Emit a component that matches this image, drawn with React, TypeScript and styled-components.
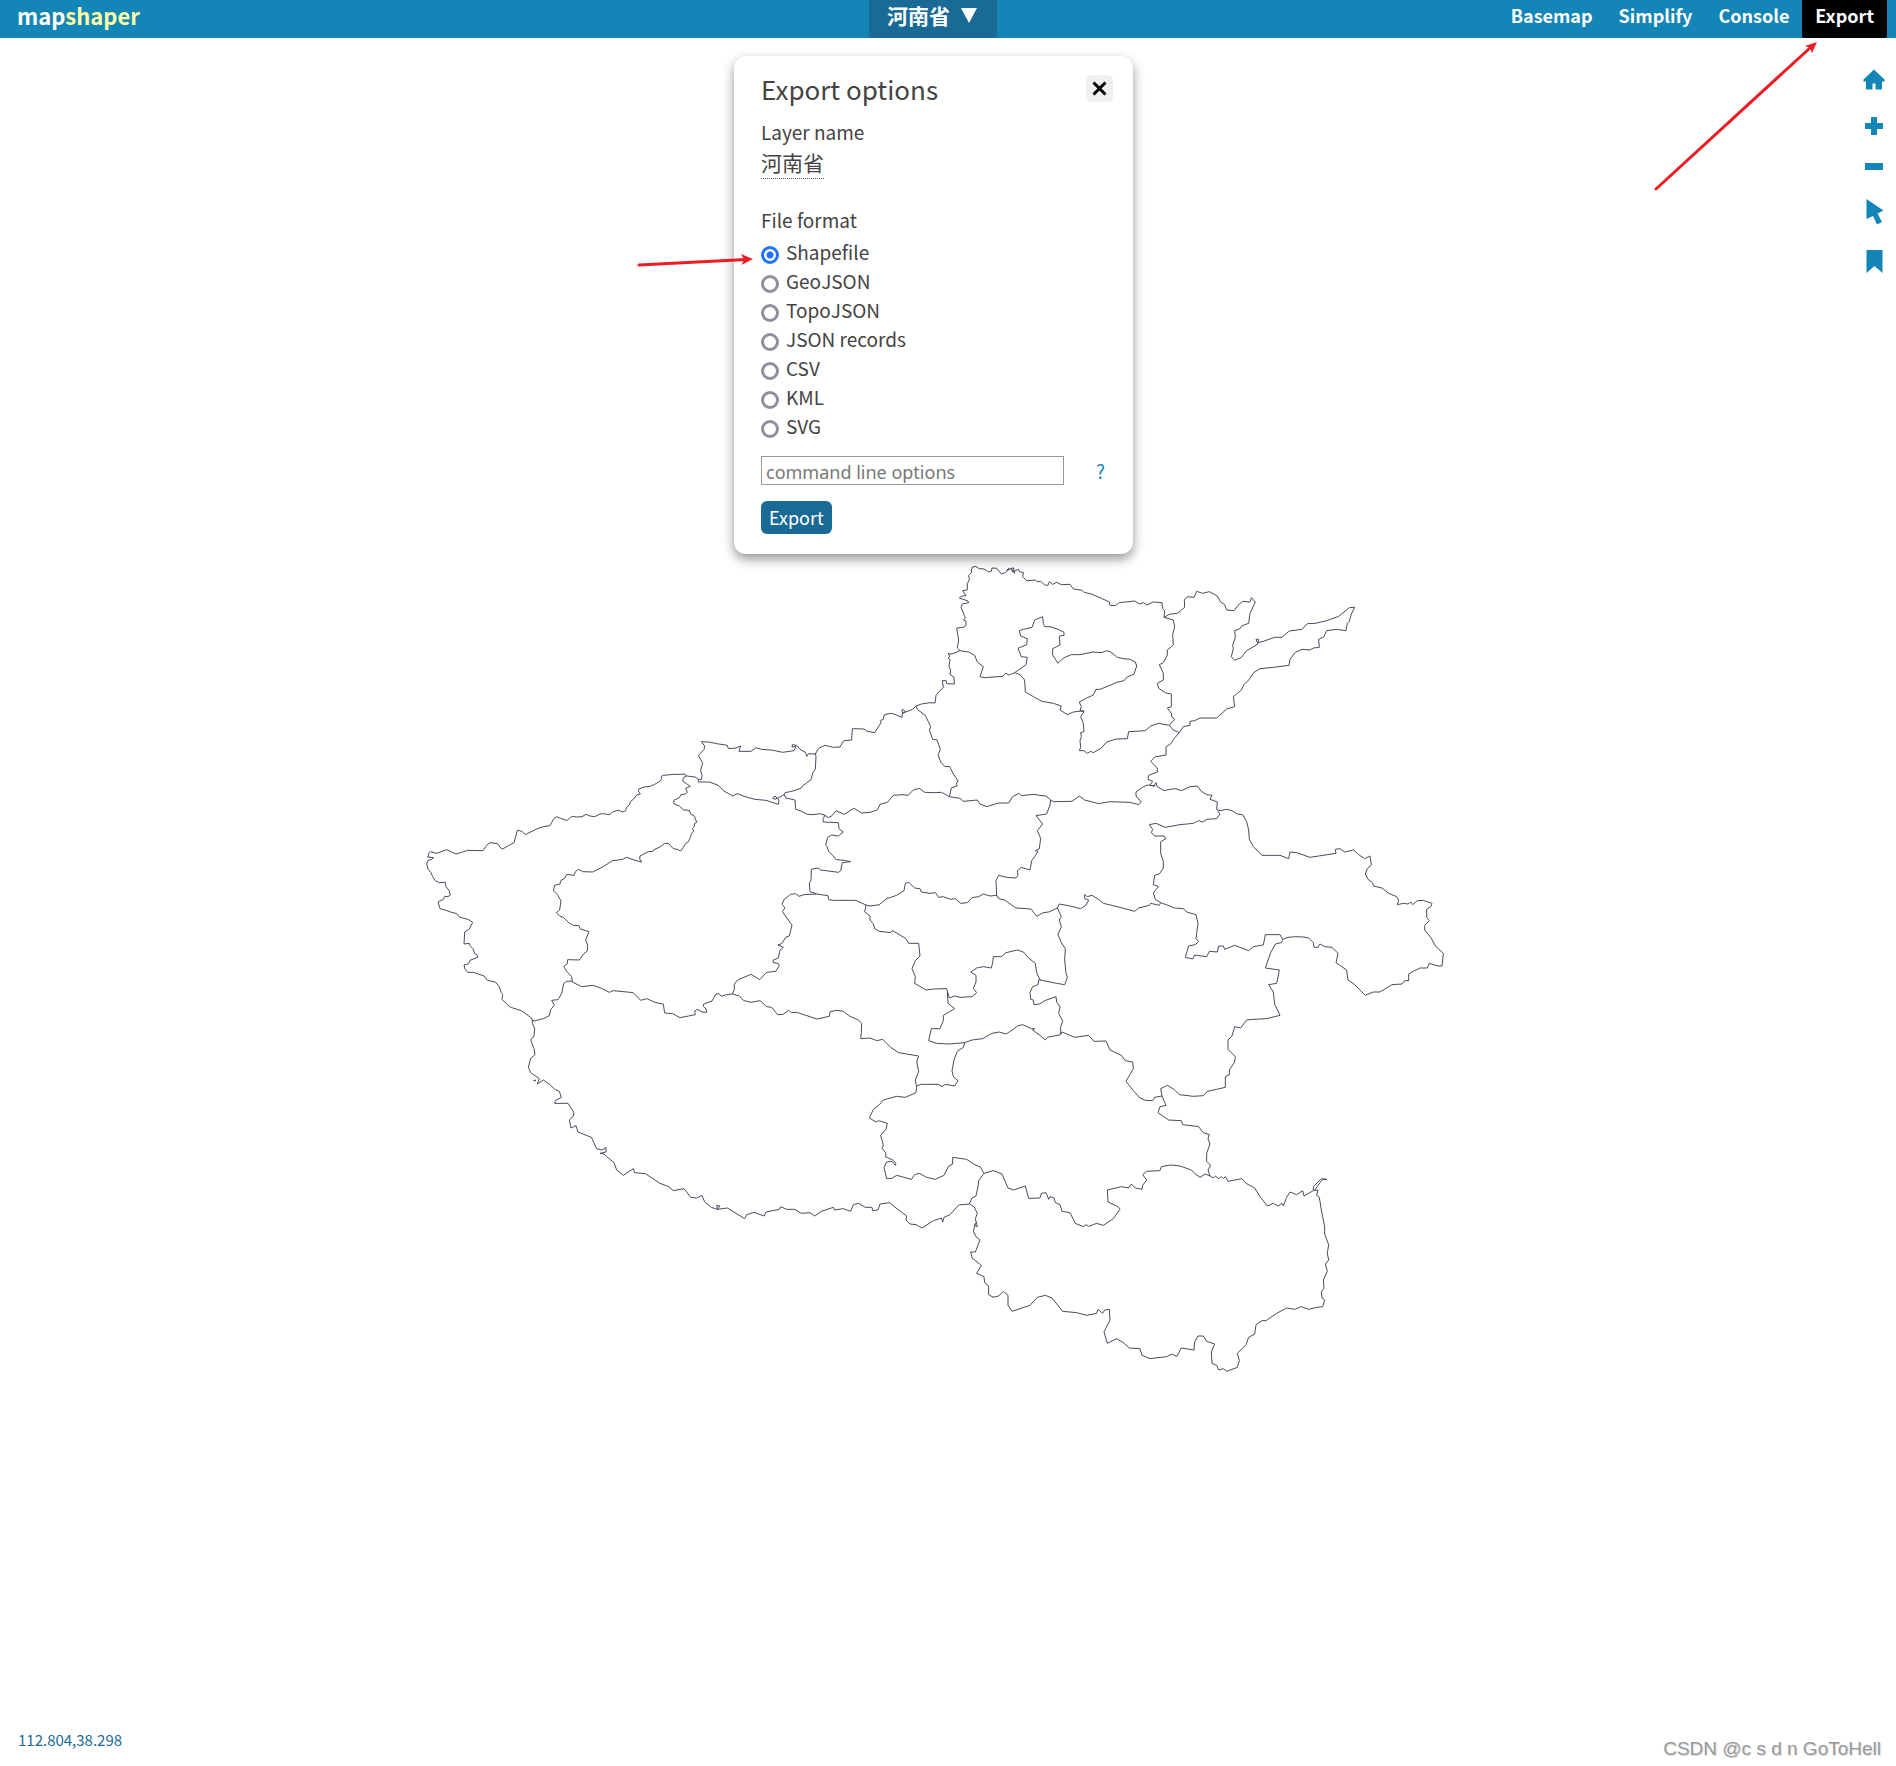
import React, { useState } from "react";
import styled, { createGlobalStyle } from "styled-components";

const SANS = `"Noto Sans CJK SC", "Source Sans Pro", sans-serif`;
const BLUE = "#1385b7";
const DARK_BLUE = "#1a6a96";

const GlobalStyle = createGlobalStyle`
  *, *::before, *::after { box-sizing: border-box; }
  body {
    margin: 0;
    background: #fff;
    color: #444;
    font-family: ${SANS};
    font-size: 19px;
    line-height: 29px;
  }
  button, input { font-family: inherit; }
`;

const Page = styled.div`
  position: relative;
  display: flex;
  flex-direction: column;
  min-height: 100vh;
  overflow: hidden;
`;

const Header = styled.header`
  display: grid;
  grid-template-columns: minmax(0, 1fr) auto minmax(0, 1fr);
  height: 38px;
  padding-right: 30px;
  background: ${BLUE};
  color: #fff;
`;

const Logo = styled.a`
  justify-self: start;
  padding-left: 17px;
  color: #fff;
  font-size: 22px;
  font-weight: 700;
  line-height: 30px;
  text-decoration: none;
`;

const LogoAccent = styled.span`
  color: #ffffa8;
`;

const LayerButton = styled.button`
  display: flex;
  gap: 11px;
  width: 128px;
  padding: 0 0 8px 18px;
  align-items: center;
  border: 0;
  background: ${DARK_BLUE};
  color: #fff;
  font-size: 21px;
  font-weight: 700;
  line-height: 30px;
`;

const Nav = styled.nav`
  display: flex;
  justify-content: flex-end;
  margin-right: -21px;
`;

const NavButton = styled.button<{ $active?: boolean }>`
  padding: 0 13px 8px;
  border: 0;
  border-radius: 0 0 2px 2px;
  background: ${(p) => (p.$active ? "#000" : "transparent")};
  color: #fff;
  font-size: 18px;
  font-weight: 700;
  line-height: 30px;
`;

const Stage = styled.main`
  position: relative;
  display: flex;
  flex: 1;
  justify-content: center;
  align-items: flex-start;
  padding: 18px 29px 0 0;
`;

const MapCanvas = styled.svg`
  position: absolute;
  inset: 0;
  width: 100%;
  height: 100%;
`;

const Outline = styled.polyline`
  fill: none;
  stroke: #4c4a5c;
  stroke-width: 3;
  stroke-linejoin: round;
`;

const Toolbar = styled.div`
  position: absolute;
  top: 32px;
  right: 11px;
  display: flex;
  flex-direction: column;
  align-items: center;
  gap: 26px;
`;

const ToolButton = styled.button`
  display: flex;
  padding: 0;
  border: 0;
  background: none;
  color: ${BLUE};

  svg {
    display: block;
    fill: currentColor;
  }
`;

const Popup = styled.form`
  position: relative;
  width: 399px;
  padding: 19px 20px 20px 27px;
  border-radius: 12px;
  background: #fff;
  box-shadow: 0 5px 12px rgba(0, 0, 0, 0.42);
`;

const PopupHead = styled.div`
  display: flex;
  justify-content: space-between;
  height: 42px;
`;

const Title = styled.h1`
  margin: 0;
  font-size: 26px;
  font-weight: 400;
  line-height: 28px;
`;

const CloseButton = styled.button`
  display: grid;
  place-items: center;
  width: 27px;
  height: 27px;
  padding: 0;
  border: 0;
  border-radius: 5px;
  background: #f0f0f0;
`;

const FieldTitle = styled.div`
  height: 30px;
  line-height: 29px;
`;

const LayerName = styled.span`
  display: inline-block;
  height: 32px;
  margin-bottom: 26px;
  border-bottom: 1px dotted #555;
  font-size: 21px;
  line-height: 30px;
`;

const Formats = styled.fieldset`
  margin: 0;
  padding: 0;
  border: 0;
`;

const FormatsLegend = styled.legend`
  padding: 0 0 3px;
  line-height: 29px;
`;

const FormatRow = styled.label`
  display: flex;
  align-items: center;
  gap: 7px;
  height: 29px;
`;

const Radio = styled.input`
  appearance: none;
  width: 18px;
  height: 18px;
  margin: 6px 0 0;
  border: 3px solid #8f8f9d;
  border-radius: 50%;
  background: #fff;

  &:checked {
    border-color: #2071ff;
    background: radial-gradient(circle, #2071ff 3px, #fff 4px);
  }
`;

const OptionsRow = styled.div`
  display: flex;
  align-items: center;
  justify-content: space-between;
  margin: 16px 0;
  padding-right: 8px;
`;

const OptionsInput = styled.input`
  width: 303px;
  height: 29px;
  padding: 2px 4px 0;
  border: 1px solid #999;
  color: #444;
  font-family: "Noto Sans", sans-serif;
  font-size: 18px;

  &::placeholder {
    color: #777;
    opacity: 1;
  }
`;

const HelpLink = styled.a`
  color: ${BLUE};
  text-decoration: none;
`;

const ExportButton = styled.button`
  display: block;
  height: 33px;
  padding: 0 8px;
  border: 0;
  border-radius: 6px;
  background: ${DARK_BLUE};
  color: #fff;
  font-size: 18px;
  line-height: 33px;
`;

const Coordinates = styled.div`
  position: absolute;
  bottom: 12px;
  left: 18px;
  color: ${DARK_BLUE};
  font-size: 15px;
  line-height: 28px;
`;

const Watermark = styled.div`
  position: absolute;
  right: 15px;
  bottom: 5px;
  color: #999;
  font-family: "Liberation Sans", sans-serif;
  font-size: 19px;
  line-height: 24px;
  text-shadow: 1px 1px 0 #ddd;
`;

const Annotations = styled.svg`
  position: absolute;
  top: 0;
  left: 0;
  width: 100%;
  height: 100%;
  pointer-events: none;
`;

/* Boundary arcs, grouped in tiles; every tile uses thirds of a map unit. */
const TILES: { x: number; y: number; arcs: string[] }[] = [
  {
    x: 400,
    y: 540,
    arcs: [
      "860,708 855,702 840,703 822,703 790,706 784,709 784,718 781,723 764,733 750,739 732,741 716,747 715,753 721,762 710,765 700,778 692,784 688,795 680,802 677,812 668,816 656,811 650,812 640,815 628,824 608,821 600,822 584,830 570,828 558,823 546,830 530,831 518,829 511,832 502,841 496,840 485,836 470,830 462,835 450,857 430,860 410,867 376,884 366,874 352,871 347,890 342,908 325,917 308,927 302,924 293,911 270,908 260,916 249,932 203,931 185,937 168,942 155,936 140,929 110,940 92,935 88,937 83,951 101,953 95,958 84,962 80,972 84,987 93,998 98,1010 106,1022 118,1028 136,1027 138,1040 147,1051 151,1065 144,1070 134,1069 130,1078 114,1086 120,1106 135,1110 152,1116 170,1121 178,1131 206,1139 218,1147 208,1167 194,1176 192,1212 208,1210 210,1217 219,1226 224,1240 232,1245 233,1252 210,1261 206,1271 192,1275 195,1287 203,1297 220,1297 235,1302 252,1308 262,1321 286,1326 298,1340 303,1357 308,1363 306,1378 320,1392 332,1402 364,1412 392,1432 397,1440",
      "860,708 850,713 848,723 862,733 871,739 857,745 862,757 856,762 843,764 838,773 821,781 822,792 838,798 851,810 868,811 872,822 884,829 886,838 891,846 884,850 883,860 877,866 881,873 875,880 871,892 865,905 855,913 850,922 842,933 832,928 820,926 806,911 794,910 780,921 762,929 759,934 745,935 720,948 719,957 725,966 705,961 680,952 668,958 655,960 637,962 610,980 578,996 548,995 535,988 527,994 522,1006 500,1003 494,1015 483,1021 480,1032 464,1036 460,1052 474,1066 479,1077 483,1080 479,1110 469,1118 480,1129 490,1132 505,1147 520,1156 537,1157 541,1167 567,1175 557,1200 563,1216 562,1233 550,1243 538,1260 503,1259 502,1271 491,1279 500,1294 515,1310 517,1326",
      "517,1326 515,1323 500,1324 491,1331 485,1360 474,1379 455,1381 463,1396 452,1409 448,1427 430,1436 402,1443 397,1440",
      "517,1326 545,1340 580,1336 604,1345 628,1357 640,1352 700,1358 722,1381 740,1376 765,1387 790,1392 794,1419 818,1421 840,1433 886,1424 884,1413 892,1408 906,1416 920,1417 918,1407 910,1399 911,1392 936,1383 948,1362 957,1361 964,1369 975,1365 997,1362",
      "997,1362 1003,1348 1003,1332 1013,1320 1053,1303 1079,1319 1100,1297 1127,1294 1138,1277 1135,1271 1119,1267 1120,1260 1135,1254 1140,1230 1150,1222 1134,1215 1145,1211 1158,1191 1168,1188 1176,1155 1165,1140 1147,1115 1155,1104 1146,1093 1152,1079 1172,1063 1187,1061 1197,1069 1212,1064 1250,1062 1230,1055 1229,1044 1228,1030 1233,1020 1234,988 1254,984 1262,990 1316,997 1322,992 1327,968 1352,965 1333,961 1308,959 1298,946 1286,934 1281,920 1277,915 1283,892 1295,885 1315,888 1330,876 1317,866 1315,848 1270,846 1269,836 1275,826",
      "860,708 885,711 895,718 904,718 906,707 902,690 908,670 895,646 912,629 914,618 904,605 926,606 950,611 982,616 985,626 1008,624 1022,618 1017,634 1053,634 1068,623 1085,628 1120,631 1148,637 1182,632 1188,619 1176,621 1177,614 1190,616 1200,628 1216,637 1221,649 1226,641 1246,642 1248,650 1246,687 1238,700 1233,719 1220,729 1208,737 1203,745 1175,754 1155,758 1153,764",
      "895,718 895,726 928,726 955,736 970,752 998,768 1012,761 1035,770 1065,778 1098,781 1135,793 1137,780 1125,768 1118,774 1125,778 1138,772 1153,764 1158,774 1185,780 1187,808 1200,812 1222,823 1240,824 1260,821 1275,826 1285,833 1296,827 1308,812 1332,823 1362,805 1385,819 1410,817 1432,810 1440,793",
      "1246,642 1256,625 1275,616 1300,622 1320,621 1331,602 1355,600 1357,566 1392,567 1402,574 1424,578 1443,548 1442,541 1450,538 1453,524 1472,520",
      "1250,1062 1284,1067 1286,1079 1300,1081 1367,1081 1398,1095 1410,1098 1440,1094",
      "1398,1095 1394,1116 1410,1128 1410,1140 1420,1152 1425,1167 1442,1176",
      "997,1362 1018,1368 1030,1381 1052,1387 1080,1382 1100,1400 1115,1402 1133,1424 1150,1423 1165,1411 1175,1418 1190,1417 1218,1426 1250,1437 1288,1429 1290,1415 1310,1411 1330,1414 1350,1429 1375,1440 1385,1450 1384,1478 1382,1496",
    ],
  },
  {
    x: 880,
    y: 540,
    arcs: [
      "32,520 42,522 66,532 68,514 64,512 70,508 76,516 66,520 98,508 108,498 124,492 150,488 165,489 168,466 180,452 190,442 187,422 198,421 200,431 223,432 222,412 210,403 212,391 207,380 210,358 204,354 210,348 204,341 216,342 240,332 232,324 236,300 230,264 250,262 258,256 258,243 250,240 256,234 243,202 247,192 266,188 264,183 238,174 246,168 258,167 248,152 262,150 262,130 268,120 266,106 274,98 276,82 286,79 298,86 312,87 326,96 334,94 336,84 350,85 364,102 376,98 388,84 380,92 400,83 404,100 394,86 398,96 415,88 419,96 430,97 428,110 440,122 466,120 472,125 482,124 494,135 504,136 508,125 518,133 530,127 544,134 570,133 580,147 606,151 612,157 634,162 664,175 688,186 690,196 706,197 718,188 764,183 778,192 790,188 800,195 820,186 846,188 848,206 854,212 852,232",
      "108,498 112,508 136,526 152,560 148,570 158,598 171,600 181,628 174,644 182,666 194,679 209,680 220,702 234,722 228,734 232,737 214,744 208,770",
      "0,793 22,787 40,766 66,764 84,766 100,750 118,745 134,757 165,758 185,757 208,770 240,775 250,784 292,780 300,792 320,800 356,789 386,789 398,770 416,760 424,767 460,763 480,766 498,768 512,780 520,785 576,784 598,768 614,780 656,791 690,785 750,787 776,794 784,786 768,768 768,756 790,740 804,735 826,738",
      "852,232 868,223 892,220 914,202 913,180 922,170 942,172 950,154 968,160 988,155 1012,168 1022,186 1034,194 1040,210 1062,212 1074,196 1088,184 1110,186 1114,173 1126,186 1110,220 1106,250 1086,257 1080,266 1064,272 1066,292 1058,316 1060,326 1054,350 1064,361 1084,352 1100,332 1134,312 1128,298 1136,298 1134,308 1150,304 1184,292 1205,292 1228,273 1266,268 1282,251 1306,250 1340,242 1376,229 1408,203 1424,202 1414,222 1408,244 1402,250 1398,272 1370,268 1340,272 1332,290 1316,298 1318,322 1300,324 1290,330 1266,328 1246,337 1230,358 1227,376 1180,382 1140,386 1122,397 1106,420 1092,434 1084,450 1060,470 1064,500 1040,507 1010,534 960,534 944,542 930,544 930,556 910,560 898,578 882,596 872,612 858,620 858,645 824,651 812,664 832,684 832,696 806,706 804,718 818,724 810,736",
      "852,232 880,240 884,260 878,284 880,315 862,330 862,345 850,368 838,374 850,400 850,420 832,430 836,445 858,459 874,462 874,500 862,504 874,520 876,532 884,538 868,556 880,570 898,578",
      "868,556 836,550 812,558 796,572 746,575 742,596 708,597 680,606 664,624 640,638 632,634 622,640 612,632 598,632 602,622 600,602 604,590 602,578 612,575 610,550 602,530 612,515 600,512 604,500 598,486 620,474 640,465 648,448 660,448 690,436 710,427 732,422 740,412 762,402 770,378 766,366 750,358 730,356 712,352 692,336 680,332 664,338 640,336 600,344 574,344 550,354 534,370 518,345 518,326 540,315 538,288 552,286 552,277 534,268 510,260 494,260 490,250 488,230 464,240 456,262 430,268 418,272 422,288 442,296 440,314 414,325 424,350 442,352 438,374 404,398",
      "240,332 266,336 284,346 292,366 310,380 300,410 312,413 368,409 376,400 388,405 404,398 420,404 434,420 436,456 460,470 486,484 520,490 544,498 540,510 562,524 580,516 612,512",
      "512,780 510,795 500,822 468,827 488,852 472,872 482,895 478,926 466,932 474,934 468,944 455,962 450,990 424,982 412,992 414,1006 408,1014 380,1012 356,1006 348,1022 350,1068",
      "0,1092 20,1076 50,1066 72,1052 76,1030 86,1027 104,1044 120,1046 124,1056 150,1060 166,1058 176,1072 190,1070 212,1078 226,1076 242,1090 262,1088 276,1073 296,1070 310,1062 330,1068 350,1066 356,1076 374,1080 408,1104 440,1106 454,1108 470,1129 490,1118 506,1116 532,1104 538,1092 570,1098 602,1106 618,1095 626,1080 614,1076 614,1064 622,1070 636,1066 658,1080 670,1090 720,1102 764,1114 776,1104 808,1096 812,1090 838,1096 842,1088",
      "842,1088 826,1078 820,1058 836,1040 820,1034 824,1006 838,1002 850,984 850,964 842,940 842,905 858,896 852,888 824,888 814,878 818,868 808,854 828,850 856,862 900,854 940,850 956,842 968,846 980,838 1010,836 1020,822 1012,812",
      "810,736 822,738 828,728 832,740 852,752 870,748 886,746 904,752 930,740 952,738 964,754 980,764 996,766 990,778 1012,786 1010,808 1020,812 1040,808 1056,812 1072,822 1088,824 1100,845 1106,870 1108,898 1120,920 1146,946 1200,946 1226,956 1230,936 1250,938 1290,952 1316,948 1368,940 1366,928 1380,926 1394,936 1420,930 1436,944 1454,956 1470,948",
      "532,1104 544,1130 538,1140 544,1160 534,1184 544,1208 556,1226 554,1260 558,1300 562,1312 554,1334 530,1330 480,1320 470,1298 466,1270 448,1256 430,1236 412,1230 378,1238 364,1250 340,1250 338,1268 334,1284 310,1280 290,1284 272,1296 288,1306 288,1326 280,1345 290,1358 276,1370 240,1372 224,1368 208,1374 200,1346 160,1347 138,1350 104,1330 106,1310 96,1286 106,1262 120,1248 116,1210 86,1210 78,1196 48,1178 38,1172 30,1178 0,1174",
      "842,1088 864,1096 884,1104 910,1106 920,1116 948,1124 954,1150 948,1196 956,1204 946,1214 926,1218 916,1252 938,1257 944,1245 980,1250 988,1234 1012,1236 1016,1218 1030,1218 1034,1228 1064,1216 1106,1232 1120,1220 1150,1215 1156,1184 1200,1184 1208,1198 1224,1192 1246,1190 1270,1191 1286,1194 1300,1208 1302,1222 1314,1222 1320,1212 1334,1220 1356,1222 1374,1240 1368,1268 1400,1290 1404,1320 1424,1334 1440,1350 1456,1366",
      "1208,1198 1204,1208 1186,1212 1172,1238 1156,1284 1198,1290 1190,1330 1166,1334 1180,1356 1184,1392 1200,1426 1160,1436 1120,1438 1100,1440 1082,1464 1064,1460 1056,1488 1044,1500",
    ],
  },
  {
    x: 500,
    y: 960,
    arcs: [
      "97,180 97,190 104,205 102,228 92,240 102,266 105,284 92,295 85,322 92,338 118,356 112,372 130,360 150,374 164,388 178,394 184,412 166,422 164,430 204,430 222,458 220,468 208,480 213,504 228,497 234,516 274,532 290,566 306,570 318,562 318,576 300,580 312,582 320,590 342,608 350,630 370,646 400,626 404,638 436,641 480,670 506,680 520,692 552,686 572,712 590,714 606,706 614,726 634,742 652,748 660,738 650,736 652,748 682,744 734,776 740,764 762,757 792,768 798,756 838,748 842,740 860,748 884,748 904,760 930,758 944,768 964,754 1000,742 1004,750 1030,746 1052,754 1060,734 1076,730 1096,742 1116,742 1118,752 1134,750 1140,732 1168,728 1196,750 1220,768 1218,780 1230,792 1248,794 1266,804 1300,782 1324,774 1328,786 1332,772 1350,764 1376,735 1408,732",
      "1408,732 1422,740 1432,760 1426,776 1432,800 1424,796 1426,790 1420,814 1428,830 1440,840 1426,876 1412,876 1416,894 1444,916 1430,940 1452,950 1454,968 1466,978 1466,1004 1480,1012",
      "100,362 108,360 104,364",
      "1082,236 1110,234 1130,242 1148,238 1172,262 1196,278 1220,282 1256,288 1250,306 1256,334 1246,360 1250,384 1248,398 1216,412 1190,409 1150,420 1138,434 1120,448 1108,474 1128,486 1136,482 1162,490 1158,508 1142,526 1150,556 1146,565 1158,580 1156,590 1178,600 1188,610 1186,616 1176,604 1160,606 1152,622 1160,656 1176,655 1190,646 1212,652 1234,658 1244,644 1258,640 1280,652 1306,658 1332,646 1346,618 1358,612 1358,592 1400,598 1428,616 1440,620 1452,640",
      "1250,378 1262,373 1316,373 1326,380 1336,373 1364,378 1374,362 1360,350 1356,332 1362,300 1372,274 1390,262 1394,248",
      "1342,96 1344,130 1364,146 1330,166 1330,182 1320,206 1294,206 1286,242 1310,250 1346,252 1394,248",
      "1452,640 1436,662 1434,680 1428,708 1416,714 1408,732",
    ],
  },
  {
    x: 960,
    y: 960,
    arcs: [
      "14,248 36,240 68,236 96,220 118,216 138,222 160,208 172,198 188,194 214,206 224,206 218,210 240,226 256,240 262,232 302,224 306,216 344,232 386,226 402,244 438,243 450,270 484,286 496,302 518,306 520,326 498,364 520,392 540,414 556,421 578,422 584,412 606,408",
      "302,222 302,200 308,184 296,160 300,140 290,126 288,110 254,122 238,132 222,134 220,120 212,118 210,98 218,80 234,74 236,60 242,58",
      "606,408 602,386 622,376 642,388 658,404 700,409 730,407 742,394 770,388 796,382 796,350 808,344 808,330 824,306 826,290 804,268 804,240",
      "606,408 618,436 600,440 594,458 626,480 664,482 668,494 716,500 730,518 748,524 744,536 750,552 740,580 740,604 752,616 744,630 750,648",
      "72,640 100,632 126,642 144,684 160,690 196,678 206,715 240,714 244,700 258,698 266,718 270,710 282,714 286,728 300,734 306,754 330,758 346,790 370,800 378,794 386,799 400,794 410,790 430,796 460,776 480,748 474,740 444,726 442,690 484,680 506,684 514,672 526,684 546,688 548,676 560,660 548,644 560,634 600,632 604,620 632,615 660,618 694,630 704,640 720,652 736,642 750,648 760,654 766,648 776,656 784,650 790,656 796,650 804,664 846,656 858,670 884,684 900,710 922,738 940,730 954,738 966,730 970,738 980,712 990,696 1010,704 1028,692 1032,708 1060,692 1074,690 1070,706 1078,712 1084,750 1094,800 1094,822 1106,854 1102,880 1106,900 1096,912 1102,934 1090,960 1092,985 1084,995 1086,1014 1094,1020 1088,1040 1070,1042 1046,1048 1024,1040 1004,1048 980,1044 950,1060 918,1082 906,1082 888,1094 884,1122 866,1132 858,1154 832,1180 838,1202 832,1222 800,1234 790,1226 776,1230 770,1216 756,1210 754,1176 764,1152 740,1144 730,1128 714,1128 704,1146 702,1170 664,1164 650,1190 636,1182 620,1190 570,1196 546,1186 540,1166 508,1164 490,1148 470,1136 442,1150 432,1116 450,1080 448,1048 434,1050 428,1060 414,1048 410,1060 380,1066 350,1058 308,1054 276,1014 256,1006 232,1012 210,1036 156,1054 144,1036 144,1006 130,994 116,1008 98,1012",
      "1060,690 1060,680 1084,656 1100,658 1088,658 1074,676 1064,690",
    ],
  },
  {
    x: 1360,
    y: 850,
    arcs: [
      "30,18 34,45 22,56 16,72 24,88 38,98 40,108 66,114 86,130 110,140 116,150 112,164 130,160 144,162 152,156 158,164 172,152 190,151 216,160 212,170 200,178 200,202 208,212 194,226 194,240 212,262 228,290 250,310 246,348 234,348 208,340 202,354 180,354 160,364 146,372 146,392 134,392 126,402 96,404 60,426 40,426 16,436",
    ],
  },
];

const FORMATS = ["Shapefile", "GeoJSON", "TopoJSON", "JSON records", "CSV", "KML", "SVG"];

const TOOLS = [
  { label: "Home", width: 22, height: 20, path: "M11 -0.500 21.500 9.500v2H19v8h-6.500v-6h-3v6H3v-8H0.500v-2z" },
  { label: "Zoom in", width: 20, height: 20, path: "M7 1h6v6h6v6h-6v6H7v-6H1V7h6z" },
  { label: "Zoom out", width: 20, height: 10, path: "M1 1h18v7H1z" },
  { label: "Inspect", width: 20, height: 26, path: "M2.500 1 19.500 12.500 13.500 15.500 18 24 13 26.500 9 18 2.500 21z" },
  { label: "Bookmarks", width: 20, height: 24, path: "M2.500 0h16v23l-8-7-8 7z" },
];

export default function App() {
  const [format, setFormat] = useState("Shapefile");

  return (
    <>
      <GlobalStyle />
      <Page>
        <Header>
          <Logo href="#">
            map<LogoAccent>shaper</LogoAccent>
          </Logo>
          <LayerButton type="button">
            <span>河南省</span>
            <svg width="16" height="15" viewBox="0 0 16 15" fill="#fff" aria-hidden="true">
              <path d="M0 0h16L8 15z" />
            </svg>
          </LayerButton>
          <Nav>
            <NavButton type="button">Basemap</NavButton>
            <NavButton type="button">Simplify</NavButton>
            <NavButton type="button">Console</NavButton>
            <NavButton type="button" $active>
              Export
            </NavButton>
          </Nav>
        </Header>

        <Stage>
          <MapCanvas viewBox="0 38 1896 1728" role="img" aria-label="河南省">
            {TILES.map((tile) => (
              <g key={`${tile.x}-${tile.y}`} transform={`translate(${tile.x} ${tile.y}) scale(${1 / 3})`}>
                {tile.arcs.map((points) => (
                  <Outline key={points} points={points} />
                ))}
              </g>
            ))}
          </MapCanvas>

          <Popup onSubmit={(e) => e.preventDefault()}>
            <PopupHead>
              <Title>Export options</Title>
              <CloseButton type="button" aria-label="Close">
                <svg width="15" height="15" viewBox="0 0 15 15" stroke="#000" strokeWidth="3" aria-hidden="true">
                  <path d="M1.500 1.500l12 12M13.500 1.500l-12 12" />
                </svg>
              </CloseButton>
            </PopupHead>
            <FieldTitle>Layer name</FieldTitle>
            <LayerName>河南省</LayerName>
            <Formats>
              <FormatsLegend>File format</FormatsLegend>
              {FORMATS.map((name) => (
                <FormatRow key={name}>
                  <Radio
                    type="radio"
                    name="format"
                    value={name}
                    checked={format === name}
                    onChange={() => setFormat(name)}
                  />
                  {name}
                </FormatRow>
              ))}
            </Formats>
            <OptionsRow>
              <OptionsInput type="text" aria-label="command line options" placeholder="command line options" />
              <HelpLink href="#">?</HelpLink>
            </OptionsRow>
            <ExportButton type="submit">Export</ExportButton>
          </Popup>

          <Toolbar>
            {TOOLS.map((tool) => (
              <ToolButton key={tool.label} type="button" aria-label={tool.label}>
                <svg
                  width={tool.width}
                  height={tool.height}
                  viewBox={`0 0 ${tool.width} ${tool.height}`}
                  overflow="visible"
                  aria-hidden="true"
                >
                  <path d={tool.path} />
                </svg>
              </ToolButton>
            ))}
          </Toolbar>
        </Stage>

        <Coordinates>112.804,38.298</Coordinates>
        <Watermark>CSDN @c s d n GoToHell</Watermark>

        <Annotations viewBox="0 0 1896 1766" fill="#ed1c24" stroke="#ed1c24" aria-hidden="true">
          <path d="M1656 189 1811 47" strokeWidth="3" strokeLinecap="round" />
          <path d="M1817 42 1805 46 1810 48 1812 53z" stroke="none" />
          <path d="M639 265 746 259.500" strokeWidth="3" strokeLinecap="round" />
          <path d="M753 259 741 254 744 259.500 741.500 265z" stroke="none" />
        </Annotations>
      </Page>
    </>
  );
}
